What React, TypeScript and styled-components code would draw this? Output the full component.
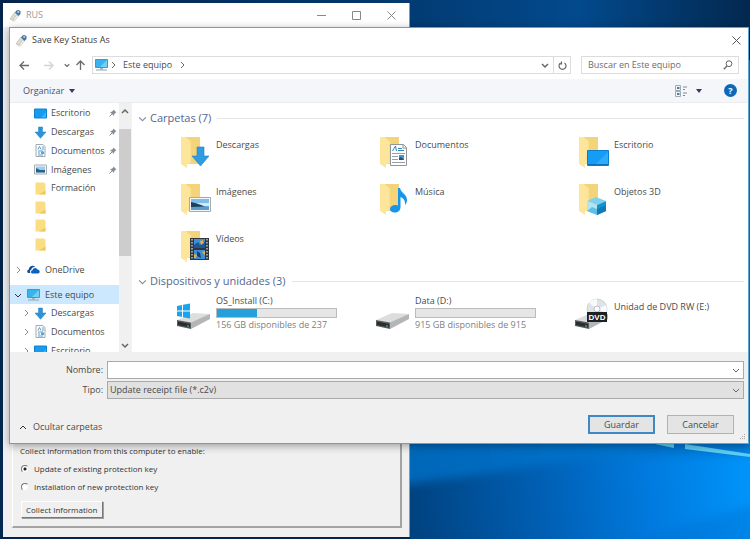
import React from "react";
import styled, { createGlobalStyle, css } from "styled-components";

const uiFont = '"Open Sans", "Noto Sans", sans-serif';

const GlobalStyle = createGlobalStyle`
  *, *::before, *::after { box-sizing: border-box; }
  html, body, #root { height: 100%; margin: 0; }
  body { font: 9px/12px ${uiFont}; color: #4a4a4a; overflow: hidden; }
  button, input, select { font: inherit; color: inherit; margin: 0; padding: 0; }
  svg { display: block; flex: none; }
`;

/* ---------- desktop ---------- */

const Desktop = styled.div`
  position: relative;
  height: 100%;
  min-height: 480px;
  background: #03284f;
  overflow: hidden;
`;

const WallpaperArt = styled.svg`
  position: absolute;
  inset: 0;
  width: 100%;
  height: 100%;
`;

const RusWindow = styled.section`
  position: absolute;
  inset: 3px 45.3% 2px 3px;
  display: flex;
  flex-direction: column;
  background: #f0f0f0;
  border-right: 1px solid #8b98a4;
`;

const Dialog = styled.section`
  position: absolute;
  inset: 27px 1px 95px 9px;
  display: flex;
  flex-direction: column;
  background: #fff;
  border: 1px solid #5ba5cf;
  box-shadow: 0 2px 8px rgba(0, 0, 0, 0.35);
`;

const TitleBar = styled.header<{ $inactive?: boolean }>`
  display: flex;
  align-items: center;
  flex: none;
  height: 24px;
  gap: 4px;
  padding: 0 ${(p) => (p.$inactive ? 2 : 4)}px 0 ${(p) => (p.$inactive ? 6 : 5)}px;
  background: #fff;
  color: ${(p) => (p.$inactive ? "#999" : "#3a3a3a")};
`;

const Title = styled.h1`
  flex: 1;
  margin: 0;
  font-size: 9px;
  font-weight: 400;
`;

const IconButton = styled.button<{ $w?: number }>`
  display: flex;
  align-items: center;
  justify-content: center;
  flex: none;
  width: ${(p) => p.$w ?? 16}px;
  height: 16px;
  border: 0;
  background: none;
`;

/* ---------- navigation ---------- */

const NavRow = styled.nav`
  display: flex;
  align-items: center;
  flex: none;
  height: 27px;
  padding: 0 9px 1px 5px;
`;

const AddressBar = styled.div`
  display: flex;
  align-items: center;
  flex: 1;
  height: 18px;
  margin: 0 10px 0 3px;
  border: 1px solid #dcdcdc;
`;

const Crumb = styled.button`
  flex: none;
  margin: 0 6px;
  border: 0;
  background: none;
`;

const Spacer = styled.span`
  flex: 1;
`;

const RefreshCell = styled.span`
  display: flex;
  align-self: stretch;
  border-left: 1px solid #dcdcdc;
`;

const SearchBox = styled.label`
  display: flex;
  align-items: center;
  flex: none;
  width: 158px;
  height: 18px;
  padding: 0 5px 0 6px;
  border: 1px solid #dcdcdc;
`;

const SearchInput = styled.input`
  flex: 1;
  min-width: 0;
  border: 0;
  outline: 0;
  background: none;
  &::placeholder { color: #6d6d6d; opacity: 1; }
`;

const Toolbar = styled.div`
  display: flex;
  align-items: center;
  flex: none;
  height: 24px;
  padding: 0 11px 0 13px;
  gap: 6px;
  background: #f4f6f9;
  border-bottom: 1px solid #ebedf0;
`;

const MenuButton = styled.button`
  display: flex;
  align-items: center;
  gap: 5px;
  border: 0;
  background: none;
  color: #435470;
`;

const HelpButton = styled.button`
  width: 13px;
  height: 13px;
  margin-left: 16px;
  border: 0;
  border-radius: 50%;
  background: #0f67b8;
  color: #fff;
  font-weight: 700;
  line-height: 13px;
`;

/* ---------- body ---------- */

const Body = styled.div`
  display: flex;
  flex: 1;
  min-height: 0;
`;

const Tree = styled.ul`
  flex: none;
  width: 109px;
  margin: 0;
  padding: 1px 0 0;
  overflow: hidden;
  list-style: none;
`;

const Branch = styled.ul<{ $h: number }>`
  display: grid;
  grid-auto-rows: 1fr;
  height: ${(p) => p.$h}px;
  margin: 0;
  padding: 0;
  list-style: none;
`;

const TreeRow = styled.li<{ $root?: boolean; $selected?: boolean }>`
  display: grid;
  grid-template-columns: 8px 13px 1fr 8px;
  align-items: center;
  column-gap: ${(p) => (p.$root ? 5 : 4)}px;
  min-height: ${(p) => (p.$root ? 19 : 0)}px;
  margin-top: ${(p) => (p.$root ? 6 : 0)}px;
  padding: 0 3px 0 ${(p) => (p.$root ? 4 : 12)}px;
  white-space: nowrap;
  ${(p) => p.$selected && css`background: #cce8ff;`}
`;

const Scrollbar = styled.div`
  display: grid;
  grid-template-rows: 26px 127fr 96fr;
  flex: none;
  width: 12px;
  background: #f0f0f0;
`;

const ScrollButton = styled.button<{ $end?: boolean }>`
  display: flex;
  align-items: ${(p) => (p.$end ? "flex-end" : "flex-start")};
  justify-content: center;
  padding: 4px 0 3px;
  border: 0;
  background: none;
`;

const Thumb = styled.span`
  background: #cdcdcd;
`;

const Content = styled.main`
  flex: 1;
  min-width: 0;
  padding: 6px 4px 0 6px;
  overflow: hidden;
  border-left: 1px solid #f2f2f2;
`;

const GroupHeader = styled.h2`
  display: flex;
  align-items: center;
  gap: 3px;
  height: 18px;
  margin: 0;
  font-size: 11px;
  font-weight: 400;
  line-height: 18px;
  color: #506890;
  &::after {
    content: "";
    flex: 1;
    margin-left: 3px;
    border-top: 1px solid #e4e6e9;
  }
`;

const Tiles = styled.ul<{ $top: number }>`
  display: grid;
  grid-template-columns: repeat(auto-fill, 163px);
  gap: 13px 36px;
  margin: 0;
  padding: ${(p) => p.$top}px 0 8px 42px;
  list-style: none;
`;

const Tile = styled.li<{ $drive?: boolean }>`
  display: grid;
  grid-template-columns: 36px 1fr;
  height: 34px;
  padding-top: ${(p) => (p.$drive ? 0 : 3)}px;
  white-space: nowrap;
  & > svg { margin: ${(p) => (p.$drive ? "0 0 0 -4px" : "-3px 0 0")}; }
`;

const DriveInfo = styled.div<{ $single?: boolean }>`
  padding-top: ${(p) => (p.$single ? 6 : 0)}px;
`;

const Usage = styled.div`
  width: 121px;
  height: 10px;
  margin: 1px 0;
  border: 1px solid #bcbcbc;
  background: #e6e6e6;
`;

const UsageFill = styled.div`
  height: 100%;
  background: #26a0da;
`;

const Muted = styled.span`
  color: #808080;
`;

/* ---------- save form ---------- */

const SaveForm = styled.form`
  display: grid;
  grid-template-columns: 93px 1fr;
  grid-template-rows: 18px 18px auto;
  align-items: center;
  row-gap: 2px;
  column-gap: 4px;
  flex: none;
  padding: 9px 4px 9px 0;
  background: #f0f0f0;
`;

const FieldLabel = styled.label`
  text-align: right;
`;

const Field = styled.div<{ $grey?: boolean }>`
  display: grid;
  grid-template-columns: 1fr 14px;
  align-items: center;
  height: 18px;
  border: 1px solid #a9a9a9;
  background: ${(p) => (p.$grey ? "#e1e1e1" : "#fff")};
`;

const FieldInput = styled.input`
  min-width: 0;
  height: 16px;
  padding: 0 3px;
  border: 0;
  outline: 0;
  background: none;
`;

const TypeSelect = styled.select`
  grid-area: 1 / 1 / 2 / 3;
  height: 16px;
  padding: 0 2px;
  border: 0;
  outline: 0;
  appearance: none;
  background: none;
`;

const SelectArrow = styled.span`
  display: flex;
  grid-area: 1 / 2 / 2 / 3;
  justify-content: center;
  pointer-events: none;
`;

const Actions = styled.div`
  display: flex;
  grid-column: 1 / -1;
  align-items: center;
  gap: 12px;
  margin-top: 14px;
  padding: 0 10px 0 9px;
`;

const HideFolders = styled.button`
  display: flex;
  align-items: center;
  gap: 6px;
  margin: 5px auto 0 0;
  border: 0;
  background: none;
`;

const PushButton = styled.button<{ $primary?: boolean }>`
  width: 67px;
  height: 19px;
  border: ${(p) => (p.$primary ? "2px solid #3f88c5" : "1px solid #b2b2b2")};
  background: #e4e4e4;
  line-height: 12px;
`;

const Grip = styled.svg`
  position: absolute;
  right: 2px;
  bottom: 2px;
`;

/* ---------- key collection panel ---------- */

const CollectPanel = styled.fieldset`
  display: flex;
  flex: 1;
  flex-direction: column;
  align-items: flex-start;
  justify-content: flex-end;
  margin: 0 7px 9px 9px;
  padding: 0 8px 8px 7px;
  border: 0;
  border-left: 1px solid #fff;
  border-right: 2px solid #a4a4a4;
  border-bottom: 2px solid #a4a4a4;
  font-size: 8px;
  color: #333;
`;

const RadioLabel = styled.label`
  display: flex;
  align-items: center;
  gap: 5px;
  margin: 6px 0 0 1px;
`;

const Radio = styled.input`
  appearance: none;
  width: 8px;
  height: 8px;
  border: 1px solid;
  border-color: #777 #eee #eee #777;
  border-radius: 50%;
  background: #fff;
  &:checked { background: radial-gradient(circle, #222 0 1px, #fff 2px); }
`;

const ClassicButton = styled.button`
  height: 17px;
  margin: 8px 0 0 1px;
  padding: 0 4px;
  border: 1px solid;
  border-color: #fff #777 #777 #fff;
  background: #f0f0f0;
  box-shadow: 1px 1px 0 #a0a0a0;
`;

/* ---------- drawings ---------- */

type Dir = "up" | "down" | "right";
const chevrons: Record<Dir, string> = {
  up: "M1 6 4 3l3 3",
  down: "M1 3l3 3 3-3",
  right: "M3 1l3 3-3 3",
};

const Chevron = ({ dir, size = 8, color = "#666", weight = 1 }: { dir: Dir; size?: number; color?: string; weight?: number }) => (
  <svg width={size} height={size} viewBox="0 0 8 8" fill="none" stroke={color} strokeWidth={weight} aria-hidden>
    <path d={chevrons[dir]} />
  </svg>
);

const Arrow = ({ turn = 0, color = "#6a6a6a" }: { turn?: number; color?: string }) => (
  <svg width="11" height="11" viewBox="0 0 11 11" fill="none" stroke={color} strokeWidth="1.3" aria-hidden>
    <path d="M10 5.5H1.2M5 1.5l-4 4 4 4" transform={`rotate(${turn} 5.5 5.5)`} />
  </svg>
);

const Caret = () => (
  <svg width="6" height="4" viewBox="0 0 6 4" aria-hidden>
    <path d="M0 0h6L3 4z" fill="#2b3f60" />
  </svg>
);

const KeyIcon = () => (
  <svg width="13" height="13" viewBox="0 0 13 13" aria-hidden>
    <path d="M1 10 6 3l3 2-5 6z" fill="#e0dbd5" stroke="#b3ada6" strokeWidth=".6" />
    <path d="m3.500 12 4-6 2 1-4 5z" fill="#f4f0ec" stroke="#b8b2ab" strokeWidth=".5" />
    <path d="m6 3.500 1.500-2L9 1l2.500 1v3L9.500 7z" fill="#44759f" />
    <circle cx="9.200" cy="3" r="1.100" fill="#b8d2e6" />
  </svg>
);

const DesktopIcon = () => (
  <svg width="13" height="11" viewBox="0 0 13 11" aria-hidden>
    <path d="M.5 1h12v9H.5z" fill="#159cf0" stroke="#0b83d1" />
    <path d="M7 9.500 12 4v5.500z" fill="#35b4ff" />
  </svg>
);

const ComputerIcon = () => (
  <svg width="13" height="12" viewBox="0 0 13 12" aria-hidden>
    <path d="M.5.5h12v8H.5z" fill="#39b3ee" stroke="#5d8eae" />
    <path d="M5 8 12 1v7z" fill="#72d0f7" />
    <path d="M5 9h3v1.500H5z" fill="#9eb3bf" />
    <path d="M1 11h11" stroke="#8aa4b3" />
  </svg>
);

const DownIcon = () => (
  <svg width="13" height="13" viewBox="0 0 13 13" aria-hidden>
    <path d="M4.500 1h4v5h3.500L6.500 12.300 1 6h3.500z" fill="#2a93da" stroke="#2680bf" strokeWidth=".5" />
  </svg>
);

const DocIcon = () => (
  <svg width="13" height="13" viewBox="0 0 13 13" aria-hidden>
    <path d="M2 .5h7l2 2v10H2z" fill="#fafcfd" stroke="#a3abb2" />
    <path d="M4 5.500 5.500 2.500 7 5.500M8 3h2M8 5h2M4 7h5M4 9h2M4 11h5" fill="none" stroke="#5fa0c9" />
    <path d="M7 7.500h3v2.500H7z" fill="#57a6cf" />
  </svg>
);

const ImageIcon = () => (
  <svg width="13" height="11" viewBox="0 0 13 11" aria-hidden>
    <path d="M.5 1h12v9H.5z" fill="#f6f8fa" stroke="#a5abb1" />
    <path d="M2 2.500h9v6H2z" fill="#9dcdee" />
    <path d="m2 4 4 2h5v2.500H2z" fill="#2c5f86" />
  </svg>
);

const SmallFolder = () => (
  <svg width="13" height="13" viewBox="0 0 13 13" aria-hidden>
    <path d="M1.500.5h9v1h1V12.500h-10z" fill="#fbdd83" />
    <path d="M10.500 9h1v3.500H5z" fill="#efc95f" />
  </svg>
);

const CloudIcon = () => (
  <svg width="13" height="9" viewBox="0 0 13 9" aria-hidden>
    <path d="M1.500 8C-.5 7.500 0 5 1.800 4.600 2 1.500 6-.5 8.200 2 6 1.700 4.500 3 4.200 4.700 2.800 5 2.500 7 3.500 8z" fill="#0a4fa0" />
    <path d="M5.500 8.500C3.500 8.200 3.600 5.500 5.500 5.300 6 2.500 9.500 2.200 10.400 4.500c2.800.2 3 3.600.8 4z" fill="#0b62bd" />
  </svg>
);

const PinIcon = () => (
  <svg width="8" height="8" viewBox="0 0 8 8" aria-hidden>
    <path d="m4.500.5 3 3-1 .3-1.300 1.400-.2 1.800L1 3l1.800-.2L4.200 1.500z" fill="#848e98" />
    <path d="m.5 7.500 2.500-2.500" stroke="#848e98" />
  </svg>
);

type Overlay = "down" | "doc" | "desktop" | "image" | "music" | "cube" | "video";

const overlays: Record<Overlay, React.ReactNode> = {
  down: <path d="M17 11h7v9h5L20.500 30 12 20h5z" fill="#2f9be0" stroke="#2183c4" strokeWidth=".6" />,
  doc: (
    <>
      <path d="M11.500 8.500h13l3 3v18h-16z" fill="#fdfdfd" stroke="#8f959b" />
      <path d="M24 8.500v3.500h3.500" fill="none" stroke="#8f959b" />
      <path d="m13.500 15 3-5 1 5M19 12.500h4M19 14.500h6" fill="none" stroke="#2f86bd" />
      <path d="M13 17.500h13M13 20.500h6M13 23.500h6M13 26.500h13" stroke="#98a0a6" />
      <path d="M20 19h5v5h-5z" fill="#4496c8" />
      <path d="m20 22 2-1 3 3h-5z" fill="#22506f" />
    </>
  ),
  desktop: (
    <>
      <path d="M9.500 14.500h21v15h-21z" fill="#159cf5" stroke="#0d7dcb" />
      <path d="m17 29 13-13v13z" fill="#3bb2ff" opacity=".7" />
      <path d="M10 28.500h20" stroke="#0d70ba" />
    </>
  ),
  image: (
    <>
      <path d="M9.500 14.500h21v14h-21z" fill="#f7f7f7" stroke="#a3a9ae" />
      <path d="M11 16h18v11H11z" fill="#7dbdec" />
      <path d="M11 20h18v3H11z" fill="#d4e9f6" />
      <path d="m11 20 5 1 6 2.500h7V27H11z" fill="#5e9bc8" />
      <path d="m11 19 6 1.500 8 3-14 .5z" fill="#1d405a" />
    </>
  ),
  music: (
    <path d="M19 5h2c1 5 7 6 7 12 0 2-1 4-2 5 .5-5-2-7-4.500-8v10c0 3-2 5.500-5.500 5.500S11 28 11 26s2.500-4 5.500-4c1 0 2 .2 2.500.5z" fill="#1696ea" />
  ),
  cube: (
    <>
      <path d="m9 18 9-4 10 4-9 4z" fill="#7ed2ee" />
      <path d="m9 18 10 4v10L9 28z" fill="#b3e4f4" />
      <path d="m9 28 5-4 5 2v6z" fill="#5fc0e4" />
      <path d="m28 18-9 4v10l9-4z" fill="#1693cf" />
      <path d="m19 26 9-4v6l-9 4z" fill="#0f7cb8" />
    </>
  ),
  video: (
    <>
      <path d="M10 8h19v22H10z" fill="#30363d" />
      <path d="M14 9h11v9H14zM14 20h11v9H14z" fill="#3f8fd8" />
      <path d="m14 15 4-3 2 3 2-5 3 2v6H14z" fill="#1f5796" />
      <path d="m20 11 3-1 1 3-3 2zM14 24l3 1-1 3h-2zM22 22l3-1v4z" fill="#e7b13a" />
      <path d="m17 21 3 2 1 5-4-2z" fill="#163f6d" />
      <path d="M12 9v21M27 9v21" stroke="#c8ccd0" strokeWidth="1.400" strokeDasharray="1.500 1.500" />
    </>
  ),
};

const FolderIcon = ({ overlay }: { overlay: Overlay }) => (
  <svg width="32" height="34" viewBox="0 0 32 34" aria-hidden>
    <path d="M3 1h17v27H7z" fill="#f4d47a" />
    <path d="M1 1h5l5 4v22l-4 1v4L1 28z" fill="#fde59b" />
    <path d="M6 1 11 5v22" fill="none" stroke="#f7d87f" />
    {overlays[overlay]}
  </svg>
);

const DriveIcon = ({ kind }: { kind: "system" | "data" | "dvd" }) => (
  <svg width="36" height="34" viewBox="0 0 36 34" overflow="visible" aria-hidden>
    <path d="m1 25 16-7 17 1-16 9z" fill="#dcdddd" />
    <path d="m1 25 14 2.500V34L1 31z" fill="#5a5d5f" />
    <path d="m15 27.500 19-8.500v5l-19 10z" fill="#b4b5b7" />
    <path d="m2 26.500 12 2.500v3.500L2 30z" fill="#2a2d2f" />
    <path d="M11 31h2" stroke="#65c99b" />
    {kind === "system" && (
      <path d="m1 11 5-1v5.500H1zm6-1.200 7-1.300v7H7zM1 16.500h5V22l-5-1zm6 0h7v7L7 22.200z" fill="#18a5ee" />
    )}
    {kind === "dvd" && (
      <>
        <circle cx="23" cy="14" r="10" fill="#dfe3e6" stroke="#b4babf" strokeWidth=".6" />
        <path d="M23 14 15 8c2-3 5-4 8-4zM23 14l9-4c1 3 1 5 0 8z" fill="#f8fafb" />
        <circle cx="23" cy="14" r="3" fill="#fff" stroke="#a8b0b6" strokeWidth=".8" />
        <rect x="13" y="17" width="20" height="10" fill="#1d2124" />
        <text x="23" y="25" textAnchor="middle" fontFamily="Liberation Sans" fontSize="8" fontWeight="700" fill="#fff">DVD</text>
      </>
    )}
  </svg>
);

const Wallpaper = () => (
  <WallpaperArt viewBox="0 0 750 539" preserveAspectRatio="none" aria-hidden>
    <defs>
      <linearGradient id="sky" x2="1">
        <stop offset="0" stopColor="#04244b" />
        <stop offset=".5" stopColor="#02386d" />
        <stop offset=".77" stopColor="#024a8d" />
        <stop offset="1" stopColor="#03284f" />
      </linearGradient>
      <linearGradient id="floor" gradientUnits="userSpaceOnUse" x1="410" x2="750" y1="520" y2="480">
        <stop offset="0" stopColor="#00427f" />
        <stop offset=".4" stopColor="#0060b5" />
        <stop offset=".7" stopColor="#007ade" />
        <stop offset="1" stopColor="#0094fa" />
      </linearGradient>
      <linearGradient id="beam" x2="1">
        <stop offset="0" stopColor="#0065b5" />
        <stop offset="1" stopColor="#007cdc" />
      </linearGradient>
      <filter id="soft" x="-10%" y="-30%" width="120%" height="160%">
        <feGaussianBlur stdDeviation="5" />
      </filter>
    </defs>
    <path d="M0 0h750v300H0z" fill="url(#sky)" />
    <path d="M410 300h340v239H410z" fill="url(#floor)" />
    <path d="M380 420h390v34L580 460l-200 28z" fill="url(#beam)" filter="url(#soft)" />
    <path d="m600 550 170-50v50z" fill="#006fd0" opacity=".4" filter="url(#soft)" />
    <path d="m650 443 24 1v4zM685 444l65 10v3l-65-8z" fill="#5fcdf2" />
    <path d="M0 537h410v2H0z" fill="#04244b" />
    <path d="M749 60h1v390h-1z" fill="#1479be" />
  </WallpaperArt>
);

/* ---------- data ---------- */

const pinned: { label: string; icon: React.ReactNode; pin?: boolean }[] = [
  { label: "Escritorio", icon: <DesktopIcon />, pin: true },
  { label: "Descargas", icon: <DownIcon />, pin: true },
  { label: "Documentos", icon: <DocIcon />, pin: true },
  { label: "Imágenes", icon: <ImageIcon />, pin: true },
  { label: "Formación", icon: <SmallFolder /> },
  { label: "", icon: <SmallFolder /> },
  { label: "", icon: <SmallFolder /> },
  { label: "", icon: <SmallFolder /> },
];

const computerItems = [
  { label: "Descargas", icon: <DownIcon /> },
  { label: "Documentos", icon: <DocIcon /> },
  { label: "Escritorio", icon: <DesktopIcon /> },
];

const folders: { label: string; overlay: Overlay }[] = [
  { label: "Descargas", overlay: "down" },
  { label: "Documentos", overlay: "doc" },
  { label: "Escritorio", overlay: "desktop" },
  { label: "Imágenes", overlay: "image" },
  { label: "Música", overlay: "music" },
  { label: "Objetos 3D", overlay: "cube" },
  { label: "Vídeos", overlay: "video" },
];

const drives = [
  { label: "OS_Install (C:)", kind: "system" as const, used: 34, free: "156 GB disponibles de 237" },
  { label: "Data (D:)", kind: "data" as const, used: 0, free: "915 GB disponibles de 915" },
  { label: "Unidad de DVD RW (E:)", kind: "dvd" as const },
];

/* ---------- page ---------- */

const CollectWindow = () => (
  <RusWindow aria-label="RUS">
    <TitleBar $inactive>
      <KeyIcon />
      <Title>RUS</Title>
      <IconButton $w={32} aria-label="Minimizar">
        <svg width="9" height="9" stroke="#888"><path d="M0 4.500h9" /></svg>
      </IconButton>
      <IconButton $w={31} aria-label="Maximizar">
        <svg width="9" height="9" fill="none" stroke="#888"><path d="M.5.5h8v8h-8z" /></svg>
      </IconButton>
      <IconButton $w={31} aria-label="Cerrar">
        <svg width="9" height="9" stroke="#888"><path d="m.5.5 8 8m0-8-8 8" /></svg>
      </IconButton>
    </TitleBar>
    <CollectPanel>
      <span>Collect information from this computer to enable:</span>
      <RadioLabel>
        <Radio type="radio" name="collect" defaultChecked />
        Update of existing protection key
      </RadioLabel>
      <RadioLabel>
        <Radio type="radio" name="collect" />
        Installation of new protection key
      </RadioLabel>
      <ClassicButton type="button">Collect Information</ClassicButton>
    </CollectPanel>
  </RusWindow>
);

const Sidebar = () => (
  <>
    <Tree>
      <li>
        <Branch $h={150}>
          {pinned.map((item, i) => (
            <TreeRow key={i}>
              <span />
              {item.icon}
              <span>{item.label}</span>
              {item.pin && <PinIcon />}
            </TreeRow>
          ))}
        </Branch>
      </li>
      <TreeRow $root>
        <Chevron dir="right" color="#888" />
        <CloudIcon />
        <span>OneDrive</span>
      </TreeRow>
      <TreeRow $root $selected>
        <Chevron dir="down" color="#333" />
        <ComputerIcon />
        <span>Este equipo</span>
      </TreeRow>
      <li>
        <Branch $h={56}>
          {computerItems.map((item) => (
            <TreeRow key={item.label}>
              <Chevron dir="right" color="#888" />
              {item.icon}
              <span>{item.label}</span>
            </TreeRow>
          ))}
        </Branch>
      </li>
    </Tree>
    <Scrollbar>
      <ScrollButton aria-label="Subir"><Chevron dir="up" weight={1.5} /></ScrollButton>
      <Thumb />
      <ScrollButton $end aria-label="Bajar"><Chevron dir="down" weight={1.5} /></ScrollButton>
    </Scrollbar>
  </>
);

const SaveDialog = () => (
  <Dialog role="dialog" aria-label="Save Key Status As">
    <TitleBar>
      <KeyIcon />
      <Title>Save Key Status As</Title>
      <IconButton aria-label="Cerrar">
        <svg width="9" height="9" stroke="#555"><path d="m.5.5 8 8m0-8-8 8" /></svg>
      </IconButton>
    </TitleBar>
    <NavRow>
      <IconButton $w={18} aria-label="Atrás"><Arrow /></IconButton>
      <IconButton $w={30} aria-label="Adelante"><Arrow turn={180} color="#d4d4d4" /></IconButton>
      <IconButton $w={8} aria-label="Recientes"><Chevron dir="down" size={6} weight={1.5} /></IconButton>
      <IconButton $w={18} aria-label="Arriba"><Arrow turn={90} /></IconButton>
      <AddressBar>
        <IconButton aria-label="Equipo"><ComputerIcon /></IconButton>
        <Chevron dir="right" />
        <Crumb type="button">Este equipo</Crumb>
        <Chevron dir="right" />
        <Spacer />
        <IconButton aria-label="Historial"><Chevron dir="down" weight={1.5} /></IconButton>
        <RefreshCell>
          <IconButton aria-label="Actualizar">
            <svg width="9" height="9" viewBox="0 0 9 9" fill="none" stroke="#666" strokeWidth="1.200">
              <path d="M2.500 2A3.500 3.500 0 1 0 6.500 2M3.500.5V3H1" />
            </svg>
          </IconButton>
        </RefreshCell>
      </AddressBar>
      <SearchBox>
        <SearchInput aria-label="Buscar" placeholder="Buscar en Este equipo" />
        <svg width="10" height="10" viewBox="0 0 10 10" fill="none" stroke="#666">
          <circle cx="6" cy="3.700" r="2.900" />
          <path d="M4 6 .8 9.200" strokeWidth="1.300" />
        </svg>
      </SearchBox>
    </NavRow>
    <Toolbar>
      <MenuButton>Organizar <Caret /></MenuButton>
      <Spacer />
      <MenuButton aria-label="Vista">
        <svg width="16" height="12" viewBox="0 0 16 12">
          <path d="M.5.500h5v5h-5zM.5 6.500h5v5h-5z" fill="#eef3f7" stroke="#a2a9b0" />
          <path d="M2 2h2.500v2H2zM2 8h2.500v2H2z" fill="#4584b0" />
          <path d="M8 2h4M8 4.500h2M8 8h4M8 10.500h2" stroke="#7f8891" />
        </svg>
        <Caret />
      </MenuButton>
      <HelpButton aria-label="Ayuda">?</HelpButton>
    </Toolbar>
    <Body>
      <Sidebar />
      <Content>
        <GroupHeader><Chevron dir="down" color="#7f8ea5" size={9} />Carpetas (7)</GroupHeader>
        <Tiles $top={9}>
          {folders.map((f) => (
            <Tile key={f.label}>
              <FolderIcon overlay={f.overlay} />
              <span>{f.label}</span>
            </Tile>
          ))}
        </Tiles>
        <GroupHeader><Chevron dir="down" color="#7f8ea5" size={9} />Dispositivos y unidades (3)</GroupHeader>
        <Tiles $top={5}>
          {drives.map((d) => (
            <Tile key={d.label} $drive>
              <DriveIcon kind={d.kind} />
              <DriveInfo $single={!d.free}>
                {d.label}
                {d.free && (
                  <>
                    <Usage><UsageFill style={{ width: `${d.used}%` }} /></Usage>
                    <Muted>{d.free}</Muted>
                  </>
                )}
              </DriveInfo>
            </Tile>
          ))}
        </Tiles>
      </Content>
    </Body>
    <SaveForm onSubmit={(e) => e.preventDefault()}>
      <FieldLabel htmlFor="name">Nombre:</FieldLabel>
      <Field>
        <FieldInput id="name" />
        <IconButton type="button" $w={14} aria-label="Nombres anteriores"><Chevron dir="down" /></IconButton>
      </Field>
      <FieldLabel htmlFor="type">Tipo:</FieldLabel>
      <Field $grey>
        <TypeSelect id="type"><option>Update receipt file (*.c2v)</option></TypeSelect>
        <SelectArrow><Chevron dir="down" /></SelectArrow>
      </Field>
      <Actions>
        <HideFolders type="button"><Chevron dir="up" color="#333" />Ocultar carpetas</HideFolders>
        <PushButton $primary>Guardar</PushButton>
        <PushButton type="button">Cancelar</PushButton>
      </Actions>
    </SaveForm>
    <Grip width="7" height="7" viewBox="0 0 7 7" aria-hidden>
      <path d="M5 0h1v1H5zM5 2h1v1H5zM3 2h1v1H3zM5 4h1v1H5zM3 4h1v1H3zM1 4h1v1H1z" fill="#aaa" />
    </Grip>
  </Dialog>
);

export default function App() {
  return (
    <>
      <GlobalStyle />
      <Desktop>
        <Wallpaper />
        <CollectWindow />
        <SaveDialog />
      </Desktop>
    </>
  );
}
